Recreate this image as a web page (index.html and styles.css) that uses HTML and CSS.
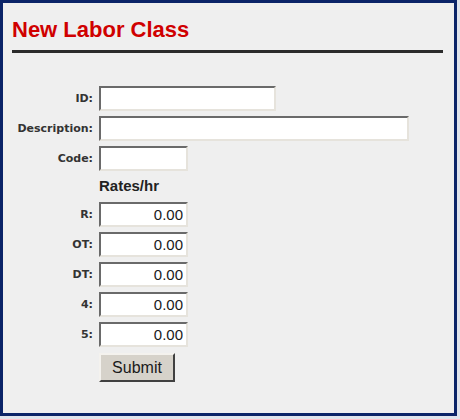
FILE: index.html
```html
<!DOCTYPE html>
<html lang="en">
<head>
    <meta charset="UTF-8">
    <title>New Labor Class</title>
    <link rel="stylesheet" href="styles.css">
</head>
<body>
    <div class="panel">
        <h1 class="title">New Labor Class</h1>
        <div class="rule"></div>
        <form class="form" id="laborForm">
            <label for="id">ID:</label>
            <input type="text" id="id" class="w-id">

            <label for="desc">Description:</label>
            <input type="text" id="desc" class="w-desc">

            <label for="code">Code:</label>
            <input type="text" id="code" class="w-rate">

            <span></span>
            <div class="rates-head">Rates/hr</div>

            <label for="r">R:</label>
            <input type="text" id="r" class="w-rate num" value="0.00">

            <label for="ot">OT:</label>
            <input type="text" id="ot" class="w-rate num" value="0.00">

            <label for="dt">DT:</label>
            <input type="text" id="dt" class="w-rate num" value="0.00">

            <label for="r4">4:</label>
            <input type="text" id="r4" class="w-rate num" value="0.00">

            <label for="r5">5:</label>
            <input type="text" id="r5" class="w-rate num" value="0.00">

            <span></span>
            <div><button type="submit" class="submit">Submit</button></div>
        </form>
    </div>
</body>
</html>
```

FILE: styles.css
```css
body {
    margin: 0;
    background: #dfe4ec;
    font-family: "Liberation Sans", Arial, sans-serif;
}
.panel {
    width: 451px;
    height: 410px;
    border: 3px solid #0b2468;
    background: #efefef;
}
.title {
    margin: 0;
    padding: 14px 0 0 9px;
    font-size: 22px;
    font-weight: bold;
    color: #d00000;
    line-height: 26px;
}
.rule {
    margin: 7px 0 0 9px;
    width: 431px;
    height: 3px;
    background: #2b2b2b;
}
.form {
    display: grid;
    grid-template-columns: 90px auto;
    column-gap: 6px;
    row-gap: 5px;
    margin: 33px 0 0 0;
    justify-items: start;
    align-items: center;
}
.form label {
    justify-self: end;
    font-family: "DejaVu Sans", Verdana, sans-serif;
    font-size: 11px;
    font-weight: bold;
    color: #333;
}
.form input {
    box-sizing: border-box;
    height: 25px;
    margin: 0;
    padding: 0 3px;
    border: 2px solid;
    border-color: #6a6a6a #e6e3dc #e6e3dc #6a6a6a;
    background: #fff;
    font-family: "Liberation Sans", Arial, sans-serif;
    font-size: 15px;
    color: #1a1a1a;
}
.w-id { width: 177px; }
.w-desc { width: 310px; }
.w-rate { width: 89px; }
.num { text-align: right; }
.rates-head {
    height: 21px;
    font-size: 15px;
    font-weight: bold;
    color: #222;
    line-height: 20px;
}
.submit {
    margin-top: 1px;
    box-sizing: border-box;
    width: 76px;
    height: 29px;
    border: 2px solid;
    border-color: #f4f2ee #404040 #404040 #f4f2ee;
    background: #d6d2ca;
    font-family: "Liberation Sans", Arial, sans-serif;
    font-size: 16px;
    color: #1a1a1a;
    padding: 0;
}
```
